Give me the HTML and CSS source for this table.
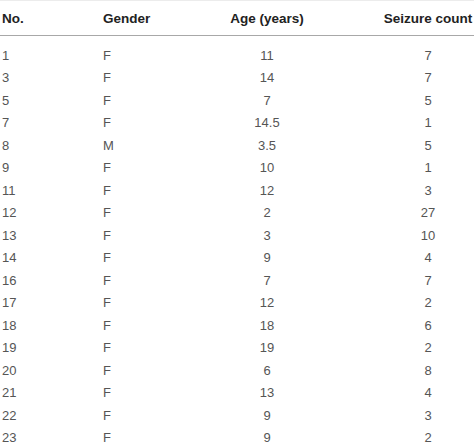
FILE: index.html
```html
<!DOCTYPE html>
<html>
<head>
<meta charset="utf-8">
<link rel="stylesheet" href="styles.css">
</head>
<body>
<div class="table">
  <div class="row head">
    <div class="c1">No.</div><div class="c2">Gender</div><div class="c3">Age (years)</div><div class="c4">Seizure count</div>
  </div>
  <div class="body">
    <div class="row"><div class="c1">1</div><div class="c2">F</div><div class="c3">11</div><div class="c4">7</div></div>
    <div class="row"><div class="c1">3</div><div class="c2">F</div><div class="c3">14</div><div class="c4">7</div></div>
    <div class="row"><div class="c1">5</div><div class="c2">F</div><div class="c3">7</div><div class="c4">5</div></div>
    <div class="row"><div class="c1">7</div><div class="c2">F</div><div class="c3">14.5</div><div class="c4">1</div></div>
    <div class="row"><div class="c1">8</div><div class="c2">M</div><div class="c3">3.5</div><div class="c4">5</div></div>
    <div class="row"><div class="c1">9</div><div class="c2">F</div><div class="c3">10</div><div class="c4">1</div></div>
    <div class="row"><div class="c1">11</div><div class="c2">F</div><div class="c3">12</div><div class="c4">3</div></div>
    <div class="row"><div class="c1">12</div><div class="c2">F</div><div class="c3">2</div><div class="c4">27</div></div>
    <div class="row"><div class="c1">13</div><div class="c2">F</div><div class="c3">3</div><div class="c4">10</div></div>
    <div class="row"><div class="c1">14</div><div class="c2">F</div><div class="c3">9</div><div class="c4">4</div></div>
    <div class="row"><div class="c1">16</div><div class="c2">F</div><div class="c3">7</div><div class="c4">7</div></div>
    <div class="row"><div class="c1">17</div><div class="c2">F</div><div class="c3">12</div><div class="c4">2</div></div>
    <div class="row"><div class="c1">18</div><div class="c2">F</div><div class="c3">18</div><div class="c4">6</div></div>
    <div class="row"><div class="c1">19</div><div class="c2">F</div><div class="c3">19</div><div class="c4">2</div></div>
    <div class="row"><div class="c1">20</div><div class="c2">F</div><div class="c3">6</div><div class="c4">8</div></div>
    <div class="row"><div class="c1">21</div><div class="c2">F</div><div class="c3">13</div><div class="c4">4</div></div>
    <div class="row"><div class="c1">22</div><div class="c2">F</div><div class="c3">9</div><div class="c4">3</div></div>
    <div class="row"><div class="c1">23</div><div class="c2">F</div><div class="c3">9</div><div class="c4">2</div></div>
  </div>
</div>
</body>
</html>
```

FILE: styles.css
```css
html, body {
  margin: 0;
  padding: 0;
  background: #fff;
  overflow: hidden;
}
body {
  font-family: "Liberation Sans", Arial, sans-serif;
  width: 474px;
  height: 444px;
}
.table {
  width: 474px;
  border-top: 1px solid #ececec;
}
.row {
  display: grid;
  grid-template-columns: 101px 103px 122px 146px;
  padding-left: 2px;
  height: 22.5px;
  align-items: center;
  font-size: 13px;
  color: #555;
  white-space: nowrap;
}
.head {
  height: 34px;
  border-bottom: 1px solid #a8a8a8;
  font-weight: bold;
  font-size: 13.5px;
  color: #222;
}
.body {
  padding-top: 8px;
}
.c3, .c4 {
  text-align: center;
}
.c4 {
  padding-left: 54px;
}
```
